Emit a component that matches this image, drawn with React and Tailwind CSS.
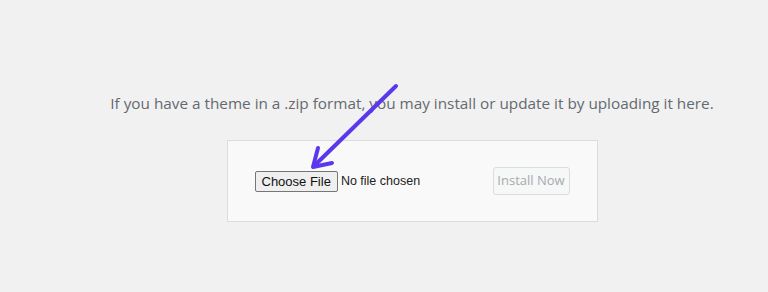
import React from 'react';

export default function App() {
  return (
    <div className="relative h-[292px] w-[768px] overflow-hidden bg-[#f1f1f1] font-['Open_Sans',sans-serif]">
      <div className="flex flex-col items-center pl-[56px] pt-[92px]">
        <p className="text-[15.3px] leading-[22px] text-[#646970] whitespace-nowrap">
          If you have a theme in a .zip format, you may install or update it by uploading it here.
        </p>

        <div className="mt-[26px] flex h-[82px] w-[371px] items-center justify-between border border-[#dcdcde] bg-[#f9f9f9] pl-[27px] pr-[27px]">
          <div className="flex items-center gap-[3px] font-['Liberation_Sans',sans-serif] text-[13px]">
            <button className="h-[21px] rounded-[2px] border border-[#767676] bg-[#efefef] px-[6px] text-[#111] leading-none">
              Choose File
            </button>
            <span className="text-[12.5px] text-[#222]">No file chosen</span>
          </div>
          <button
            disabled
            className="h-[28px] w-[77px] rounded-[3px] border border-[#dcdcde] bg-[#f6f7f7] text-[13px] text-[#a7aaad]"
          >
            Install Now
          </button>
        </div>
      </div>

      {/* arrow pointing at the file button */}
      <svg className="absolute left-0 top-0" width="768" height="292" viewBox="0 0 768 292">
        <g stroke="#5b37ee" strokeWidth="4" strokeLinecap="round" fill="none">
          <line x1="396" y1="86" x2="314" y2="166" />
          <polyline points="318,148 313,167 332,163" strokeLinejoin="round" />
        </g>
      </svg>
    </div>
  );
}
